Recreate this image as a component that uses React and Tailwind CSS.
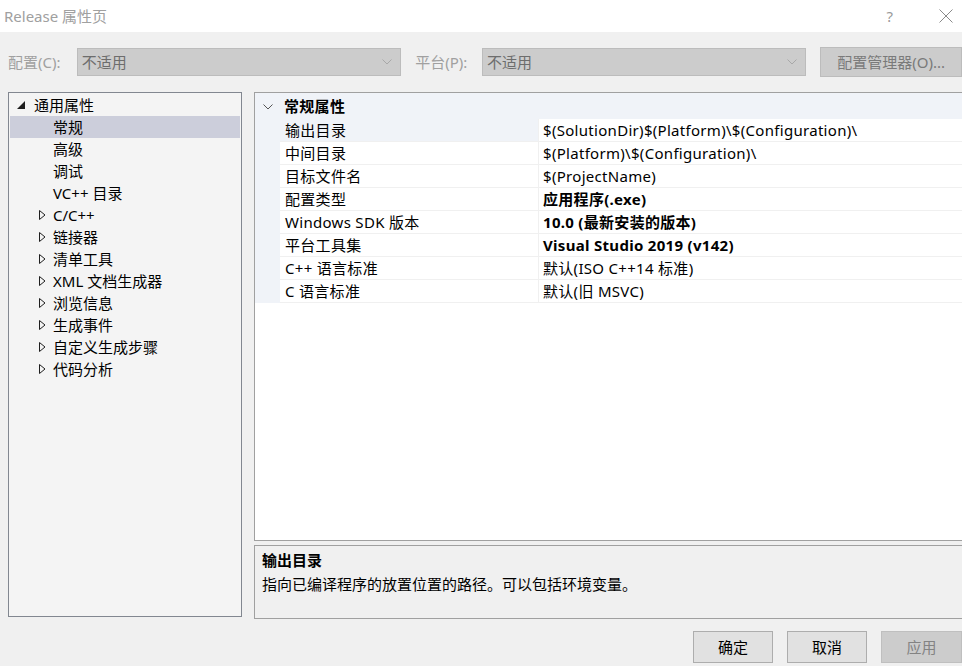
import React from 'react';

const font = { fontFamily: '"Segoe UI", "Noto Sans", "Noto Sans CJK SC", sans-serif' };

const treeItems = [
  { label: '常规', child: true, selected: true },
  { label: '高级', child: true },
  { label: '调试', child: true },
  { label: 'VC++ 目录', child: true },
  { label: 'C/C++', expander: true },
  { label: '链接器', expander: true },
  { label: '清单工具', expander: true },
  { label: 'XML 文档生成器', expander: true },
  { label: '浏览信息', expander: true },
  { label: '生成事件', expander: true },
  { label: '自定义生成步骤', expander: true },
  { label: '代码分析', expander: true },
];

const props = [
  { name: '输出目录', value: '$(SolutionDir)$(Platform)\\$(Configuration)\\', active: true },
  { name: '中间目录', value: '$(Platform)\\$(Configuration)\\' },
  { name: '目标文件名', value: '$(ProjectName)' },
  { name: '配置类型', value: '应用程序(.exe)', bold: true },
  { name: 'Windows SDK 版本', value: '10.0 (最新安装的版本)', bold: true },
  { name: '平台工具集', value: 'Visual Studio 2019 (v142)', bold: true },
  { name: 'C++ 语言标准', value: '默认(ISO C++14 标准)' },
  { name: 'C 语言标准', value: '默认(旧 MSVC)' },
];

function Chevron({ className }) {
  return (
    <svg width="10" height="6" viewBox="0 0 10 6" className={className}>
      <path d="M0.5 0.5 L5 5 L9.5 0.5" fill="none" stroke="currentColor" strokeWidth="1" />
    </svg>
  );
}

function Combo({ text }) {
  return (
    <div className="flex items-center h-[28px] flex-1 bg-[#cccccc] border border-[#bcbcbc] pl-[4px] pr-[8px]">
      <span className="flex-1 text-[#6d6d6d]">{text}</span>
      <Chevron className="text-[#a8a8a8]" />
    </div>
  );
}

export default function App() {
  return (
    <div className="w-[962px] h-[666px] bg-[#f0f0f0] flex flex-col overflow-hidden text-[15px] text-black" style={font}>
      {/* title bar */}
      <div className="h-[32px] bg-white flex items-center pl-[4px] shrink-0">
        <span className="flex-1 text-[#a0a0a0] text-[15px]">Release 属性页</span>
        <span className="text-[#9a9a9a] text-[15px] mr-[46px]">?</span>
        <svg width="14" height="14" viewBox="0 0 14 14" className="mr-[9px] text-[#8a8a8a]">
          <path d="M0.5 0.5 L13.5 13.5 M13.5 0.5 L0.5 13.5" stroke="currentColor" strokeWidth="1" />
        </svg>
      </div>

      {/* config row */}
      <div className="flex items-center h-[60px] pl-[8px] shrink-0">
        <span className="text-[#a0a0a0] w-[69px]">配置(C):</span>
        <div className="flex w-[325px]"><Combo text="不适用" /></div>
        <span className="text-[#a0a0a0] ml-[14px] w-[67px]">平台(P):</span>
        <div className="flex w-[325px]"><Combo text="不适用" /></div>
        <div className="ml-[14px] h-[30px] w-[142px] bg-[#cccccc] border border-[#bcbcbc] flex items-center justify-center text-[#7a7a7a]">
          配置管理器(O)...
        </div>
      </div>

      {/* main */}
      <div className="flex flex-1 min-h-0 pl-[8px]">
        {/* tree */}
        <div className="w-[234px] h-[525px] bg-[#f4f4f4] border border-[#828790] pt-[1px] shrink-0">
          <div className="h-[22px] flex items-center pl-[8px]">
            <svg width="8" height="8" viewBox="0 0 8 8" className="mr-[9px]"><path d="M8 0 L8 8 L0 8 Z" fill="#1e1e1e" /></svg>
            <span>通用属性</span>
          </div>
          {treeItems.map((it) => (
            <div key={it.label} className={`h-[22px] flex items-center mx-[1px] ${it.selected ? 'bg-[#cccedb]' : ''}`}>
              <div className="w-[43px] flex justify-end pr-[7px]">
                {it.expander && (
                  <svg width="7" height="10" viewBox="0 0 7 10"><path d="M0.5 0.5 L6 5 L0.5 9.5 Z" fill="none" stroke="#1e1e1e" strokeWidth="1" /></svg>
                )}
              </div>
              <span>{it.label}</span>
            </div>
          ))}
        </div>

        {/* right column */}
        <div className="flex flex-col ml-[12px] flex-1">
          <div className="h-[449px] bg-white border border-[#a0a0a0] border-r-0 flex flex-col tracking-[0.3px]">
            <div className="h-[26px] bg-[#f0f3f8] flex items-center pt-[1px]">
              <div className="w-[25px] flex justify-center pl-[1px]"><Chevron className="text-[#555]" /></div>
              <span className="font-bold ml-[4px]">常规属性</span>
            </div>
            {props.map((p) => (
              <div key={p.name} className="h-[23px] flex">
                <div className="w-[25px] bg-[#f0f3f8]" />
                <div className={`w-[259px] flex items-center pl-[5px] border-r border-b border-[#f0f0f0] ${p.active ? 'bg-[#f0f3f8]' : ''}`}>
                  <span>{p.name}</span>
                </div>
                <div className={`flex-1 flex items-center pl-[4px] border-b border-[#f0f0f0] ${p.bold ? 'font-bold' : ''}`}>
                  <span>{p.value}</span>
                </div>
              </div>
            ))}
          </div>
          <div className="mt-[4px] h-[74px] border border-[#a0a0a0] border-r-0 pl-[7px] pt-[3px]">
            <div className="font-bold">输出目录</div>
            <div className="mt-[1px]">指向已编译程序的放置位置的路径。可以包括环境变量。</div>
          </div>

          {/* buttons */}
          <div className="flex justify-end mt-[12px]">
            <div className="w-[80px] h-[32px] bg-[#e1e1e1] border border-[#adadad] flex items-center justify-center">确定</div>
            <div className="w-[80px] h-[32px] ml-[14px] bg-[#e1e1e1] border border-[#adadad] flex items-center justify-center">取消</div>
            <div className="w-[81px] h-[32px] ml-[14px] bg-[#cccccc] border border-[#bfbfbf] flex items-center justify-center text-[#838383]">应用</div>
          </div>
        </div>
      </div>
    </div>
  );
}
